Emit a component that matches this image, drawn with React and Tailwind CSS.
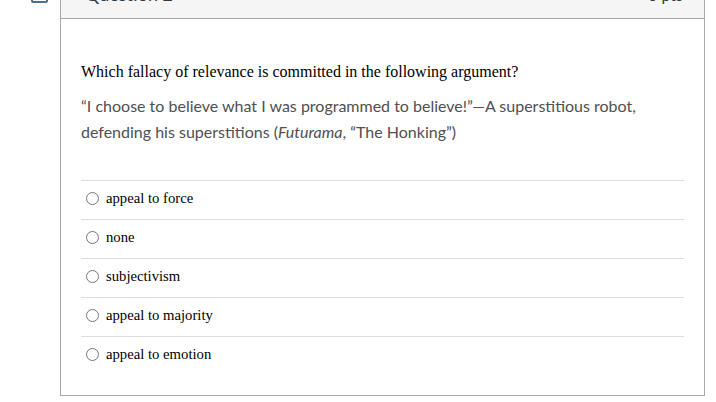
import React from "react";

const options = ["appeal to force", "none", "subjectivism", "appeal to majority", "appeal to emotion"];

export default function App() {
  return (
    <div className="relative w-[716px] h-[402px] overflow-hidden bg-white">
      <div className="absolute left-[31px] top-[-14px] w-[17px] h-[17px] rounded-[2px] border-2 border-[#4f6f8f]" />
      <div className="ml-[60px] mt-[-26px] w-[645px] border border-[#a9a9a9]">
        <div className="h-[44px] bg-[#f5f5f5] border-b border-[#a9a9a9] flex items-end justify-between pl-[24px] pr-[21px] pb-[15px] text-[18px] text-[#2d3b45] leading-none" style={{ fontFamily: "Lato, sans-serif" }}>
          <span>Question 2</span>
          <span className="text-[16px]">0 pts</span>
        </div>
        <div className="px-[20px] pt-[43px] pb-[20px]">
          <p className="text-[16px] leading-[20px] text-black" style={{ fontFamily: '"Liberation Serif", "Times New Roman", serif' }}>
            Which fallacy of relevance is committed in the following argument?
          </p>
          <p className="mt-[11px] text-[16px] leading-[26px] text-[#505050]" style={{ fontFamily: "Lato, sans-serif" }}>
            “I choose to believe what I was programmed to believe!”—A superstitious robot, defending his superstitions (<em>Futurama</em>, “The Honking”)
          </p>
          <div className="mt-[35px]">
            {options.map((o) => (
              <div key={o} className="h-[39px] border-t border-[#dddddd] flex items-center pl-[5px] pb-[3px]">
                <span className="w-[13px] h-[13px] rounded-full border border-[#767676] bg-white shrink-0" />
                <span className="ml-[7px] text-[14.7px] text-black" style={{ fontFamily: '"Liberation Serif", "Times New Roman", serif' }}>{o}</span>
              </div>
            ))}
          </div>
        </div>
      </div>
    </div>
  );
}
